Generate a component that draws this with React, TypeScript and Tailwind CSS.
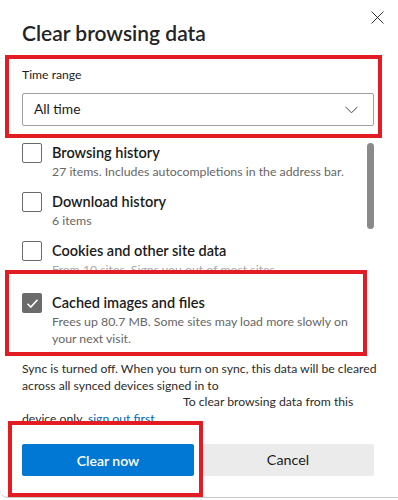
import React from 'react';

const font = { fontFamily: '"Segoe UI", Lato, "Noto Sans", sans-serif' };

function Checkbox({ checked }: { checked?: boolean }) {
  if (checked) {
    return (
      <div className="flex h-5 w-5 shrink-0 items-center justify-center rounded-[2px] bg-[#6b6b6b]">
        <svg width="13" height="13" viewBox="0 0 13 13" fill="none">
          <path d="M1.5 6.8 L4.8 10 L11.5 2.8" stroke="white" strokeWidth="1.6" />
        </svg>
      </div>
    );
  }
  return <div className="h-5 w-5 shrink-0 rounded-[2px] border border-[#6b6b6b] bg-white" />;
}

function Item({ label, sub, checked, faded }: { label: string; sub: React.ReactNode; checked?: boolean; faded?: boolean }) {
  return (
    <div className="flex gap-[10px]">
      <Checkbox checked={checked} />
      <div className="flex flex-col">
        <div className="whitespace-nowrap text-[14.5px] font-semibold leading-[20px] text-[#1b1b1b]">{label}</div>
        <div className={`whitespace-nowrap text-[12.3px] leading-[17px] ${faded ? 'text-[#a8a8a8]' : 'text-[#666666]'}`}>{sub}</div>
      </div>
    </div>
  );
}

export default function App() {
  return (
    <div className="relative h-[500px] w-[398px] overflow-hidden bg-white" style={font}>
      <div className="h-[498px] rounded-bl-lg border-b border-[#c8c8c8] pl-[22px] pr-[24px] pt-[19px]">
        {/* Header */}
        <h1 className="text-[21px] font-semibold leading-[28px] text-[#242424]">Clear browsing data</h1>
        <button className="absolute right-[14px] top-[11px] text-[#333]" aria-label="Close">
          <svg width="13" height="13" viewBox="0 0 13 13">
            <path d="M0.5 0.5 L12.5 12.5 M12.5 0.5 L0.5 12.5" stroke="currentColor" strokeWidth="1" />
          </svg>
        </button>

        {/* Time range */}
        <div className="mt-[19px] text-[12.2px] leading-[18px] text-[#1b1b1b]">Time range</div>
        <div className="mt-[9px] flex h-[33px] items-center justify-between rounded-[2px] border border-[#a0a0a0] pl-[11px] pr-[15px]">
          <span className="text-[13.8px] text-[#1b1b1b]">All time</span>
          <svg width="13" height="8" viewBox="0 0 13 8" fill="none">
            <path d="M0.5 0.8 L6.5 6.8 L12.5 0.8" stroke="#444" strokeWidth="1" />
          </svg>
        </div>

        {/* Scroll list */}
        <div className="mt-[17px] flex h-[129px] overflow-hidden">
          <div className="flex flex-1 flex-col gap-[12px]">
            <Item label="Browsing history" sub="27 items. Includes autocompletions in the address bar." />
            <Item label="Download history" sub="6 items" />
            <Item label="Cookies and other site data" sub="From 10 sites. Signs you out of most sites." faded />
          </div>
          <div className="w-[7px] shrink-0">
            <div className="h-[86px] rounded-full bg-[#8a8a8a]" />
          </div>
        </div>

        {/* Cached */}
        <div className="mt-[21px]">
          <Item
            checked
            label="Cached images and files"
            sub={
              <>
                <span className="block">Frees up 80.7 MB. Some sites may load more slowly on</span>
                <span className="block">your next visit.</span>
              </>
            }
          />
        </div>

        {/* Sync notice */}
        <div className="mt-[14px] whitespace-nowrap text-[12.2px] leading-[16.5px] text-[#2b2b2b]">
          <div>Sync is turned off. When you turn on sync, this data will be cleared</div>
          <div>across all synced devices signed in to</div>
          <div className="pl-[161px]">To clear browsing data from this</div>
          <div>
            device only, <span className="text-[#0067b8]">sign out first</span>.
          </div>
        </div>

        {/* Buttons */}
        <div className="mt-[17px] flex gap-2">
          <button className="h-8 flex-1 rounded-[2px] bg-[#0078d4] text-[14px] font-semibold text-white">Clear now</button>
          <button className="h-8 flex-1 rounded-[2px] bg-[#ebebeb] text-[14.3px] text-[#1b1b1b]">Cancel</button>
        </div>
      </div>

      {/* Red annotation boxes */}
      <div className="pointer-events-none absolute left-[5px] top-[55px] h-[83px] w-[377px] border-4 border-[#e31b23]" />
      <div className="pointer-events-none absolute left-[5px] top-[270px] h-[86px] w-[362px] border-4 border-[#e31b23]" />
      <div className="pointer-events-none absolute left-[8px] top-[421px] h-[76px] w-[195px] border-4 border-[#e31b23]" />
    </div>
  );
}
